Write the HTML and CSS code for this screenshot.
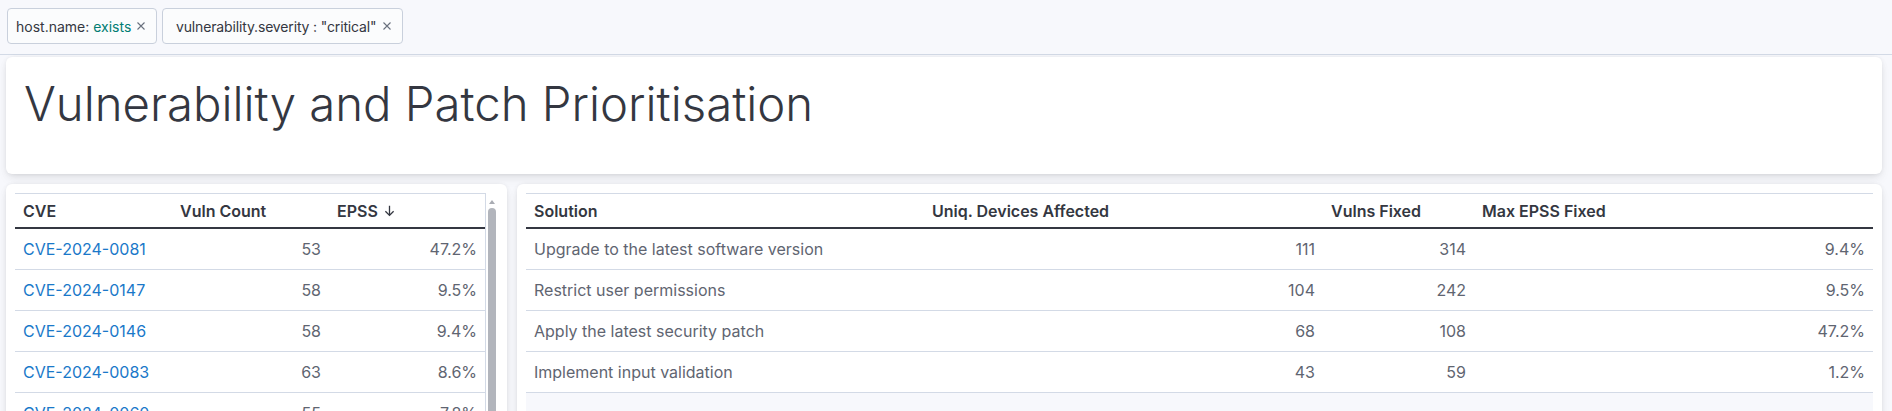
FILE: index.html
```html
<!DOCTYPE html>
<html lang="en">
<head>
<meta charset="utf-8">
<title>Vulnerability and Patch Prioritisation</title>
<link rel="stylesheet" href="styles.css">
</head>
<body>
<div class="filterbar">
  <div class="pill pill-a">
    <span class="pill-text">host.name: <span class="val">exists</span></span>
    <svg class="x" viewBox="0 0 10 10"><path d="M1.5 1.5 L8.5 8.5 M8.5 1.5 L1.5 8.5"/></svg>
  </div>
  <div class="pill pill-b">
    <span class="pill-text">vulnerability.severity : "critical"</span>
    <svg class="x" viewBox="0 0 10 10"><path d="M1.5 1.5 L8.5 8.5 M8.5 1.5 L1.5 8.5"/></svg>
  </div>
</div>
<div class="dashboard">
  <div class="panel title-panel">
    <h1 class="title">Vulnerability and Patch Prioritisation</h1>
  </div>
  <div class="row">
    <div class="panel left-panel">
      <div class="grid-wrap">
        <div class="grid cve-grid">
          <div class="tr head">
            <div class="th">CVE</div>
            <div class="th">Vuln Count</div>
            <div class="th">EPSS <svg class="sort" viewBox="0 0 12 12"><path d="M6 1.5 V10.5 M2.2 6.7 L6 10.5 L9.8 6.7"/></svg></div>
          </div>
          <div class="tr"><div class="td link">CVE-2024-0081</div><div class="td num">53</div><div class="td num">47.2%</div></div>
          <div class="tr"><div class="td link">CVE-2024-0147</div><div class="td num">58</div><div class="td num">9.5%</div></div>
          <div class="tr"><div class="td link">CVE-2024-0146</div><div class="td num">58</div><div class="td num">9.4%</div></div>
          <div class="tr"><div class="td link">CVE-2024-0083</div><div class="td num">63</div><div class="td num">8.6%</div></div>
          <div class="tr"><div class="td link">CVE-2024-0060</div><div class="td num">55</div><div class="td num">7.8%</div></div>
        </div>
        <div class="scrollbar">
          <div class="arrow"></div>
          <div class="thumb"></div>
        </div>
      </div>
    </div>
    <div class="panel right-panel">
      <div class="grid sol-grid">
        <div class="tr head">
          <div class="th">Solution</div>
          <div class="th">Uniq. Devices Affected</div>
          <div class="th">Vulns Fixed</div>
          <div class="th">Max EPSS Fixed</div>
        </div>
        <div class="tr"><div class="td">Upgrade to the latest software version</div><div class="td num">111</div><div class="td num">314</div><div class="td num">9.4%</div></div>
        <div class="tr"><div class="td">Restrict user permissions</div><div class="td num">104</div><div class="td num">242</div><div class="td num">9.5%</div></div>
        <div class="tr"><div class="td">Apply the latest security patch</div><div class="td num">68</div><div class="td num">108</div><div class="td num">47.2%</div></div>
        <div class="tr"><div class="td">Implement input validation</div><div class="td num">43</div><div class="td num">59</div><div class="td num">1.2%</div></div>
        <div class="filler"></div>
      </div>
    </div>
  </div>
</div>
</body>
</html>
```
FILE: styles.css
```css
* { box-sizing: border-box; }
html, body {
  margin: 0;
  padding: 0;
  height: 411px;
  overflow: hidden;
}
body {
  font-family: Inter, "Noto Sans", sans-serif;
  background: #f7f8fc;
  color: #343741;
}
.filterbar {
  height: 55px;
  padding: 8px 7px 0;
  display: flex;
  gap: 5px;
  border-bottom: 1px solid #d3dae6;
  background: #f7f8fc;
}
.pill {
  height: 36px;
  display: flex;
  align-items: center;
  border: 1px solid #c9d0dc;
  border-radius: 4px;
  background: #fbfcfd;
  font-size: 14px;
  color: #343741;
  padding-right: 10px;
}
.pill-a { padding-left: 8px; width: 150px; }
.pill-b { padding-left: 13px; width: 241px; }
.pill-b .pill-text { letter-spacing: -0.15px; }
.pill-text { white-space: nowrap; }
.val { color: #017d73; }
.x {
  width: 10px;
  height: 10px;
  margin-left: auto;
  fill: none;
  stroke: #69707d;
  stroke-width: 1.1;
}
.dashboard {
  padding: 2px 10px 0 6px;
  display: flex;
  flex-direction: column;
  gap: 10px;
}
.panel {
  background: #fff;
  border-radius: 6px;
  box-shadow: 0 0.9px 4px -1px rgba(0,0,0,0.08), 0 2.6px 8px -1px rgba(0,0,0,0.06), 0 5.7px 12px -1px rgba(0,0,0,0.05);
}
.title-panel {
  height: 117px;
  padding: 19px 18px 0;
}
.title {
  margin: 0;
  font-size: 47.3px;
  font-weight: 300;
  line-height: 1.2;
  color: #343741;
  letter-spacing: 0;
}
.row {
  display: flex;
  gap: 10px;
}
.left-panel {
  width: 501px;
  height: 300px;
  padding: 9px 10px 0 9px;
}
.right-panel {
  flex: 1;
  height: 300px;
  padding: 9px 9px 0 9px;
}
.grid-wrap {
  display: flex;
  gap: 1px;
}
.grid { font-size: 16px; }
.cve-grid {
  width: 472px;
  border-right: 1px solid #d3dae6;
}
.tr {
  display: grid;
  height: 41px;
  border-bottom: 1px solid #d3dae6;
  align-items: center;
}
.cve-grid .tr { grid-template-columns: 157px 157px 1fr; }
.sol-grid .tr { grid-template-columns: 398px 399px 151px 1fr; }
.tr.head {
  height: 36px;
  border-top: 1px solid #d3dae6;
  border-bottom: 2px solid #343741;
}
.th {
  padding: 0 8px;
  font-weight: 600;
  color: #343741;
  white-space: nowrap;
  display: flex;
  align-items: center;
  gap: 5px;
}
.sort {
  width: 13px;
  height: 13px;
  fill: none;
  stroke: #343741;
  stroke-width: 1.2;
}
.td {
  padding: 0 8px;
  color: #5f6571;
  white-space: nowrap;
}
.td.num { text-align: right; }
.td.link { color: #1a78c9; }
.filler {
  height: 40px;
  background: #f7f8fc;
}
.scrollbar {
  width: 10px;
  padding-top: 7px;
  display: flex;
  flex-direction: column;
  align-items: center;
}
.arrow {
  width: 0;
  height: 0;
  border-left: 3px solid transparent;
  border-right: 3px solid transparent;
  border-bottom: 4px solid #a9acb3;
}
.thumb {
  margin-top: 4px;
  width: 8px;
  height: 220px;
  border-radius: 4px;
  background: #b2b5bc;
}
```
